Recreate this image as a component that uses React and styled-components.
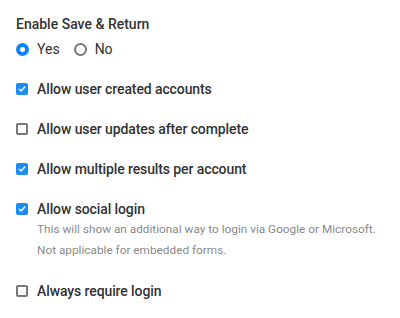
import React, { useState } from "react";
import styled, { createGlobalStyle } from "styled-components";

const GlobalStyle = createGlobalStyle`
  body {
    margin: 0;
    background: #fff;
    font-family: Roboto, "Liberation Sans", sans-serif;
  }
`;

const Panel = styled.div`
  padding: 14px 16px 10px;
  display: flex;
  flex-direction: column;
`;

const Title = styled.div`
  font-size: 14px;
  font-weight: 500;
  line-height: 20px;
  color: #333;
  margin-bottom: 5px;
`;

const RadioGroup = styled.div`
  display: flex;
  align-items: center;
  gap: 14px;
  height: 20px;
  margin-bottom: 20px;
`;

const RadioOption = styled.label`
  display: flex;
  align-items: center;
  gap: 8px;
  font-size: 14px;
  color: #333;
  cursor: pointer;
`;

const RadioDot = styled.span`
  box-sizing: border-box;
  width: 13px;
  height: 13px;
  border-radius: 50%;
  border: ${(p) => (p.$on ? "4px solid #0a84ff" : "2px solid #777")};
  background: #fff;
`;

const Option = styled.div`
  display: flex;
  flex-direction: column;
  margin-bottom: 20px;

  &:last-child {
    margin-bottom: 0;
  }
`;

const CheckRow = styled.label`
  display: flex;
  align-items: center;
  gap: 9px;
  height: 20px;
  font-size: 14px;
  font-weight: 500;
  color: #333;
  letter-spacing: -0.1px;
  cursor: pointer;
`;

const Box = styled.span`
  box-sizing: border-box;
  width: 12px;
  height: 12px;
  border-radius: 2px;
  display: flex;
  align-items: center;
  justify-content: center;
  background: ${(p) => (p.$on ? "#1a8cf0" : "#fff")};
  border: ${(p) => (p.$on ? "none" : "2px solid #777")};
`;

const Hint = styled.div`
  margin-left: 21px;
  font-size: 11.8px;
  line-height: 21px;
  color: #8a8a8a;
`;

const options = [
  { label: "Allow user created accounts", on: true },
  { label: "Allow user updates after complete", on: false },
  { label: "Allow multiple results per account", on: true },
  {
    label: "Allow social login",
    on: true,
    hint: [
      "This will show an additional way to login via Google or Microsoft.",
      "Not applicable for embedded forms.",
    ],
  },
  { label: "Always require login", on: false },
];

const Check = () => (
  <svg width="8" height="8" viewBox="0 0 10 10">
    <path d="M1.5 5.2 L4 7.5 L8.5 2.5" fill="none" stroke="#fff" strokeWidth="1.8" strokeLinecap="round" strokeLinejoin="round" />
  </svg>
);

const App = () => {
  const [save, setSave] = useState("yes");
  const [items, setItems] = useState(options);

  const toggle = (i) =>
    setItems(items.map((o, j) => (j === i ? { ...o, on: !o.on } : o)));

  return (
    <>
      <GlobalStyle />
      <Panel>
        <Title>Enable Save &amp; Return</Title>
        <RadioGroup>
          <RadioOption onClick={() => setSave("yes")}>
            <RadioDot $on={save === "yes"} />
            Yes
          </RadioOption>
          <RadioOption onClick={() => setSave("no")}>
            <RadioDot $on={save === "no"} />
            No
          </RadioOption>
        </RadioGroup>
        {items.map((o, i) => (
          <Option key={o.label}>
            <CheckRow onClick={() => toggle(i)}>
              <Box $on={o.on}>{o.on && <Check />}</Box>
              {o.label}
            </CheckRow>
            {o.hint && o.hint.map((h) => <Hint key={h}>{h}</Hint>)}
          </Option>
        ))}
      </Panel>
    </>
  );
};

export default App;
